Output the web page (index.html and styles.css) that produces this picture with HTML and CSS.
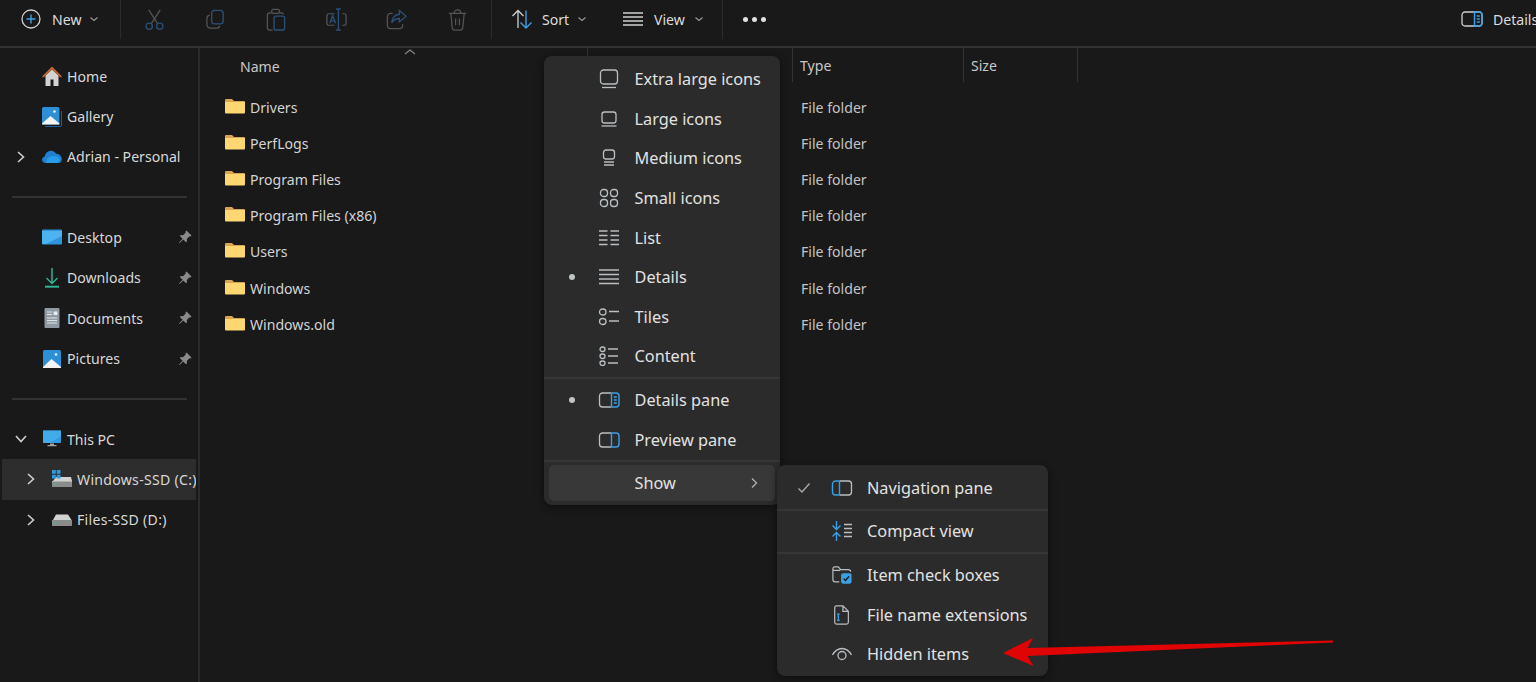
FILE: index.html
```html
<!DOCTYPE html>
<html lang="en">
<head>
<meta charset="utf-8">
<title>File Explorer</title>
<link rel="stylesheet" href="styles.css">
</head>
<body>
<div class="window">
  <header class="toolbar">
    <div class="tb-new">
      <svg class="ic22" viewBox="0 0 22 22"><circle cx="11" cy="11" r="9" class="s-light"/><path d="M11 6.500v9M6.500 11h9" class="s-blue"/></svg>
      <span class="tb-label">New</span>
      <svg class="chev" viewBox="0 0 10 6"><path d="M1.500 1.500 5 4.500 8.500 1.500"/></svg>
    </div>
    <div class="tb-sep"></div>
    <div class="tb-icons">
      <svg class="ic24" viewBox="0 0 24 24"><path d="M6 2l9.500 14.500M18 2 8.500 16.500" class="s-dim"/><circle cx="6.500" cy="19" r="3.300" class="s-dimblue"/><circle cx="17.500" cy="19" r="3.300" class="s-dimblue"/></svg>
      <svg class="ic24" viewBox="0 0 24 24"><rect x="8" y="2.500" width="12" height="14" rx="3" class="s-dimblue"/><path d="M6 7.500C3.800 8 3 9.500 3 11v6c0 2.500 1.500 4 4 4h6c1.500 0 3-.8 3.500-2.500" class="s-dim"/></svg>
      <svg class="ic24" viewBox="0 0 24 24"><path d="M8 5H6C4.500 5 3.500 6 3.500 7.500v13c0 1.500 1 2.500 2.500 2.500h3M16 5h2c1.200 0 2 .6 2.300 1.600" class="s-dim"/><rect x="8" y="1.500" width="8" height="4" rx="1.500" class="s-dim"/><rect x="10.500" y="8.500" width="11" height="14.500" rx="2" class="s-dimblue"/></svg>
      <svg class="ic24" viewBox="0 0 24 24"><path d="M10 6H4C2.500 6 2 7 2 8v8c0 1 .5 2 2 2h6M18 6h2c1.500 0 2 1 2 2v8c0 1-.5 2-2 2h-2" class="s-dim"/><path d="M14 1v22M11.500 1h5M11.500 23h5" class="s-dimblue"/><path d="M5 16 8 8l3 8M6 13.500h4" class="s-dimblue"/></svg>
      <svg class="ic24" viewBox="0 0 24 24"><path d="M8 5.500H6C4 5.500 2.500 7 2.500 9v9c0 2 1.500 3.500 3.500 3.500h9c2 0 3.500-1.500 3.500-3.500v-1" class="s-dim"/><path d="M15 2.500 22 8.500 15 14.500V11c-4 0-6 1-8 4.500C7.500 10 10 7 15 6.500z" class="s-dimblue"/></svg>
      <svg class="ic24" viewBox="0 0 24 24"><path d="M3 5.500h18M5 5.500l1.500 15c.2 1.600 1.300 2.500 2.800 2.500h5.400c1.500 0 2.600-.9 2.800-2.500L19 5.500M8.500 5.500c0-2 1.500-3.500 3.500-3.500s3.500 1.500 3.500 3.500M10 11v7M14 11v7" class="s-dim"/></svg>
    </div>
    <div class="tb-sep"></div>
    <div class="tb-sort">
      <svg class="ic22" viewBox="0 0 22 22"><path d="M7 20V2.500M1.500 8 7 2.500 12.500 8" class="s-light"/><path d="M15 2.500V20M9.500 14.500 15 20l5.500-5.500" class="s-blue"/></svg>
      <span class="tb-label">Sort</span>
      <svg class="chev" viewBox="0 0 10 6"><path d="M1.500 1.500 5 4.500 8.500 1.500"/></svg>
    </div>
    <div class="tb-view">
      <svg class="ic22 wide" viewBox="0 0 22 16"><path d="M1 2h20M1 6h20M1 10h20M1 14h20" class="s-light"/></svg>
      <span class="tb-label">View</span>
      <svg class="chev" viewBox="0 0 10 6"><path d="M1.500 1.500 5 4.500 8.500 1.500"/></svg>
    </div>
    <div class="tb-sep sep-view"></div>
    <div class="tb-more"><i></i><i></i><i></i></div>
    <div class="tb-space"></div>
    <div class="tb-details">
      <svg class="ic22 wide" viewBox="0 0 22 16"><rect x="1" y="1" width="20" height="14" rx="3" class="s-light"/><path d="M13.500 1h4.500a3 3 0 0 1 3 3v8a3 3 0 0 1-3 3h-4.500zM15.800 5h3M15.800 8h3M15.800 11h3" class="s-blue"/></svg>
      <span class="tb-label">Details</span>
    </div>
  </header>

  <div class="body">
    <nav class="sidebar">
      <div class="nav-row">
        <span class="twist"></span>
        <svg class="nav-ic" viewBox="0 0 20 20"><path d="M3.500 9.500V20h5v-6.500h3V20h5V9.500L10 3.500z" fill="#d3d3d3"/><path d="M0 10.500 10 .5l10 10-1.500 1L10 3.300 1.500 11.500z" fill="#c56a36"/></svg>
        <span>Home</span>
      </div>
      <div class="nav-row">
        <span class="twist"></span>
        <svg class="nav-ic" viewBox="0 0 20 20"><path d="M3 19.500h15a1.500 1.500 0 0 0 1.500-1.500V4" fill="none" stroke="#1f5e9e"/><rect x="0" y="0" width="17.500" height="17.500" rx="1.500" fill="#2d8fd6"/><path d="M0 16.500 8.500 9l9 7.500v1H0z" fill="#f4f4f4"/><circle cx="12.500" cy="4.500" r="1.300" fill="#e8f4fb"/></svg>
        <span>Gallery</span>
      </div>
      <div class="nav-row">
        <svg class="twist" viewBox="0 0 10 14"><path d="M2 2l5.500 5L2 12"/></svg>
        <svg class="nav-ic" viewBox="0 0 20 14"><path d="M3.500 13C1.500 13 0 11.500 0 9.700c0-1.600 1.100-3 2.700-3.300C3.500 3 6 .8 9 .8c2.200 0 4.100 1.200 5 3 2.800 0 5.500 1.800 5.800 5.200.2 2.400-1.300 4-3.500 4z" fill="#1f7fd1"/><path d="M5 9c2-2.500 5-3.500 8-3 2.500.3 4 1.500 5 3l-2 4H4z" fill="#2a9be5"/></svg>
        <span>Adrian - Personal</span>
      </div>
      <div class="nav-div"></div>
      <div class="nav-row has-pin">
        <span class="twist"></span>
        <svg class="nav-ic" viewBox="0 0 20 16"><rect y="0.500" width="20" height="15" rx="1" fill="#2f94dc"/><path d="M0 2h20v5L4 15H0z" fill="#4cb3ee"/></svg>
        <span class="nav-text">Desktop</span>
        <svg class="pin" viewBox="0 0 14 14"><path d="M8.500.5 13.500 5.500l-1 1-1-.2L8.800 9l.2 2.200-1 1-2.800-2.800L1.500 13 1 12.500l3.600-3.700L1.800 6l1-1 2.200.2L7.700 2.500l-.2-1z"/></svg>
      </div>
      <div class="nav-row has-pin">
        <span class="twist"></span>
        <svg class="nav-ic" viewBox="0 0 20 20"><path d="M10 0v15M4.500 10 10 15.500 15.500 10" fill="none" stroke="#2fb295" stroke-width="1.500"/><path d="M3 18.700h14" stroke="#2fb295" stroke-width="2"/></svg>
        <span class="nav-text">Downloads</span>
        <svg class="pin" viewBox="0 0 14 14"><path d="M8.500.5 13.500 5.500l-1 1-1-.2L8.800 9l.2 2.200-1 1-2.800-2.800L1.500 13 1 12.500l3.600-3.700L1.800 6l1-1 2.200.2L7.700 2.500l-.2-1z"/></svg>
      </div>
      <div class="nav-row has-pin">
        <span class="twist"></span>
        <svg class="nav-ic" viewBox="0 0 20 20"><rect x="2.500" y="0" width="15" height="20" rx="1" fill="#8f9aa3"/><path d="M5 4h5M5 6.500h5M5 10h10M5 12.500h10M5 15h10" stroke="#dfe4e7" stroke-width="1.200"/><rect x="11.500" y="3.500" width="4" height="3.500" fill="#e6eaec"/></svg>
        <span class="nav-text">Documents</span>
        <svg class="pin" viewBox="0 0 14 14"><path d="M8.500.5 13.500 5.500l-1 1-1-.2L8.800 9l.2 2.200-1 1-2.800-2.800L1.500 13 1 12.500l3.600-3.700L1.800 6l1-1 2.200.2L7.700 2.500l-.2-1z"/></svg>
      </div>
      <div class="nav-row has-pin">
        <span class="twist"></span>
        <svg class="nav-ic" viewBox="0 0 20 20"><rect x="1" y="1" width="18" height="18" rx="1.500" fill="#2d8fd6"/><path d="M1 18 9.500 10l9.500 8v1H1z" fill="#f4f4f4"/><circle cx="14" cy="5.500" r="1.300" fill="#e8f4fb"/></svg>
        <span class="nav-text">Pictures</span>
        <svg class="pin" viewBox="0 0 14 14"><path d="M8.500.5 13.500 5.500l-1 1-1-.2L8.800 9l.2 2.200-1 1-2.800-2.800L1.500 13 1 12.500l3.600-3.700L1.800 6l1-1 2.200.2L7.700 2.500l-.2-1z"/></svg>
      </div>
      <div class="nav-div"></div>
      <div class="nav-row">
        <svg class="twist open" viewBox="0 0 14 10"><path d="M2 2l5 5.500L12 2"/></svg>
        <svg class="nav-ic" viewBox="0 0 20 18"><rect x="1" y="0.500" width="18" height="12.500" rx="1" fill="#2e9ae2"/><path d="M1 .5h18v6L8 13H1z" fill="#4cb3ee" opacity=".7"/><path d="M8 13.500h4v1.500h2.500v1.300h-9V15H8z" fill="#a3a3a3"/></svg>
        <span class="nudge">This PC</span>
      </div>
      <div class="nav-row sub selected">
        <svg class="twist" viewBox="0 0 10 14"><path d="M2 2l5.500 5L2 12"/></svg>
        <svg class="nav-ic" viewBox="0 0 20 18"><path d="M1 11 4 7h15l1 4v5.500H0v-5.500z" fill="#d2d2d2"/><rect y="11.500" width="20" height="5.500" rx="1" fill="#8b8b8b"/><rect x="2" y="13.500" width="2" height="1.500" fill="#35c27e"/><path d="M0 0h3.800v3.800H0zM4.700 0h3.800v3.800H4.700zM0 4.700h3.800v3.800H0zM4.700 4.700h3.800v3.800H4.700z" fill="#2e9ae2"/></svg>
        <span class="clip">Windows-SSD (C:)</span>
      </div>
      <div class="nav-row sub">
        <svg class="twist" viewBox="0 0 10 14"><path d="M2 2l5.500 5L2 12"/></svg>
        <svg class="nav-ic" viewBox="0 0 20 14"><path d="M1 7 4 1.500h12L19.500 7v5.500H0V7z" fill="#d2d2d2"/><rect y="7" width="20" height="6" rx="1" fill="#8b8b8b"/><rect x="2" y="9.300" width="2" height="1.500" fill="#35c27e"/></svg>
        <span>Files-SSD (D:)</span>
      </div>
    </nav>

    <main class="files">
      <div class="list-head">
        <div class="col col-name"><svg class="sort-up" viewBox="0 0 12 6"><path d="M1 5 6 1l5 4"/></svg>Name</div>
        <div class="col col-date"></div>
        <div class="col col-type">Type</div>
        <div class="col col-size">Size</div>
      </div>
      <div class="file-row"><div class="fname"><svg class="folder" viewBox="0 0 20 16"><path d="M0 2a1 1 0 0 1 1-1h6l2 2h10a1 1 0 0 1 1 1v1H0z" fill="#dca553"/><path d="M0 4h20v10.500a1 1 0 0 1-1 1H1a1 1 0 0 1-1-1z" fill="#fcd772"/></svg>Drivers</div><div></div><div class="ftype">File folder</div></div>
      <div class="file-row"><div class="fname"><svg class="folder" viewBox="0 0 20 16"><path d="M0 2a1 1 0 0 1 1-1h6l2 2h10a1 1 0 0 1 1 1v1H0z" fill="#dca553"/><path d="M0 4h20v10.500a1 1 0 0 1-1 1H1a1 1 0 0 1-1-1z" fill="#fcd772"/></svg>PerfLogs</div><div></div><div class="ftype">File folder</div></div>
      <div class="file-row"><div class="fname"><svg class="folder" viewBox="0 0 20 16"><path d="M0 2a1 1 0 0 1 1-1h6l2 2h10a1 1 0 0 1 1 1v1H0z" fill="#dca553"/><path d="M0 4h20v10.500a1 1 0 0 1-1 1H1a1 1 0 0 1-1-1z" fill="#fcd772"/></svg>Program Files</div><div></div><div class="ftype">File folder</div></div>
      <div class="file-row"><div class="fname"><svg class="folder" viewBox="0 0 20 16"><path d="M0 2a1 1 0 0 1 1-1h6l2 2h10a1 1 0 0 1 1 1v1H0z" fill="#dca553"/><path d="M0 4h20v10.500a1 1 0 0 1-1 1H1a1 1 0 0 1-1-1z" fill="#fcd772"/></svg>Program Files (x86)</div><div></div><div class="ftype">File folder</div></div>
      <div class="file-row"><div class="fname"><svg class="folder" viewBox="0 0 20 16"><path d="M0 2a1 1 0 0 1 1-1h6l2 2h10a1 1 0 0 1 1 1v1H0z" fill="#dca553"/><path d="M0 4h20v10.500a1 1 0 0 1-1 1H1a1 1 0 0 1-1-1z" fill="#fcd772"/></svg>Users</div><div></div><div class="ftype">File folder</div></div>
      <div class="file-row"><div class="fname"><svg class="folder" viewBox="0 0 20 16"><path d="M0 2a1 1 0 0 1 1-1h6l2 2h10a1 1 0 0 1 1 1v1H0z" fill="#dca553"/><path d="M0 4h20v10.500a1 1 0 0 1-1 1H1a1 1 0 0 1-1-1z" fill="#fcd772"/></svg>Windows</div><div></div><div class="ftype">File folder</div></div>
      <div class="file-row"><div class="fname"><svg class="folder" viewBox="0 0 20 16"><path d="M0 2a1 1 0 0 1 1-1h6l2 2h10a1 1 0 0 1 1 1v1H0z" fill="#dca553"/><path d="M0 4h20v10.500a1 1 0 0 1-1 1H1a1 1 0 0 1-1-1z" fill="#fcd772"/></svg>Windows.old</div><div></div><div class="ftype">File folder</div></div>
    </main>
  </div>
</div>

<div class="menu menu-view">
  <div class="mi"><span class="mark"></span><svg class="mic" viewBox="0 0 22 20"><rect x="2.500" y="1" width="17" height="14" rx="3" class="s-menu"/><path d="M4 18.500h14" class="s-menu"/></svg><span>Extra large icons</span></div>
  <div class="mi"><span class="mark"></span><svg class="mic" viewBox="0 0 22 20"><rect x="4" y="3" width="14" height="11" rx="2.500" class="s-menu"/><path d="M3.500 17h15" class="s-menu"/></svg><span>Large icons</span></div>
  <div class="mi"><span class="mark"></span><svg class="mic" viewBox="0 0 22 20"><rect x="5.500" y="2" width="11" height="9" rx="2.500" class="s-menu"/><path d="M6 14h10M6 17h10" class="s-menu"/></svg><span>Medium icons</span></div>
  <div class="mi"><span class="mark"></span><svg class="mic" viewBox="0 0 22 20"><rect x="2.500" y="1.500" width="7" height="7" rx="3" class="s-menu"/><rect x="12.500" y="1.500" width="7" height="7" rx="3" class="s-menu"/><rect x="2.500" y="11.500" width="7" height="7" rx="3" class="s-menu"/><rect x="12.500" y="11.500" width="7" height="7" rx="3" class="s-menu"/></svg><span>Small icons</span></div>
  <div class="mi"><span class="mark"></span><svg class="mic" viewBox="0 0 22 20"><path d="M1 3h8.500M1 7.500h8.500M1 12h8.500M1 16.500h8.500M12.500 3H21M12.500 7.500H21M12.500 12H21M12.500 16.500H21" class="s-menu"/></svg><span>List</span></div>
  <div class="mi"><span class="mark"><i class="dot"></i></span><svg class="mic" viewBox="0 0 22 20"><path d="M1 3h20M1 7.500h20M1 12h20M1 16.500h20" class="s-menu"/></svg><span>Details</span></div>
  <div class="mi"><span class="mark"></span><svg class="mic" viewBox="0 0 22 20"><rect x="1.500" y="2" width="6.500" height="6" rx="3" class="s-menu"/><rect x="1.500" y="11.500" width="6.500" height="6" rx="3" class="s-menu"/><path d="M11 4.500h10M11 14h10" class="s-menu"/></svg><span>Tiles</span></div>
  <div class="mi"><span class="mark"></span><svg class="mic" viewBox="0 0 22 20"><rect x="2" y="1" width="5" height="4.500" rx="2.200" class="s-menu"/><rect x="2" y="8" width="5" height="4.500" rx="2.200" class="s-menu"/><rect x="2" y="15" width="5" height="4.500" rx="2.200" class="s-menu"/><path d="M10 3h10M10 10h10M10 17h10" class="s-menu"/></svg><span>Content</span></div>
  <div class="msep"></div>
  <div class="mi"><span class="mark"><i class="dot"></i></span><svg class="mic" viewBox="0 0 22 20"><path d="M13 3H4.500a3 3 0 0 0-3 3v8a3 3 0 0 0 3 3H13" class="s-menu"/><path d="M13.500 3H18a3 3 0 0 1 3 3v8a3 3 0 0 1-3 3h-4.500zM15.800 7h3M15.800 10h3M15.800 13h3" class="s-blue"/></svg><span>Details pane</span></div>
  <div class="mi"><span class="mark"></span><svg class="mic" viewBox="0 0 22 20"><path d="M13 3H4.500a3 3 0 0 0-3 3v8a3 3 0 0 0 3 3H13" class="s-menu"/><path d="M13.500 3H18a3 3 0 0 1 3 3v8a3 3 0 0 1-3 3h-4.500z" class="s-blue"/></svg><span>Preview pane</span></div>
  <div class="msep"></div>
  <div class="mi mi-show"><span class="mark"></span><span class="mic"></span><span>Show</span><svg class="mi-arrow" viewBox="0 0 8 12"><path d="M2 1.500 6.500 6 2 10.500"/></svg></div>
</div>

<div class="menu menu-show">
  <div class="mi"><svg class="check" viewBox="0 0 14 12"><path d="M1.500 6.500 5 10l7.500-8.500"/></svg><svg class="mic" viewBox="0 0 22 20"><path d="M8.500 3H4.500a3 3 0 0 0-3 3v8a3 3 0 0 0 3 3h4z" class="s-blue"/><path d="M9 3h8.500a3 3 0 0 1 3 3v8a3 3 0 0 1-3 3H9" class="s-menu"/></svg><span>Navigation pane</span></div>
  <div class="msep"></div>
  <div class="mi"><span class="mark"></span><svg class="mic" viewBox="0 0 22 20"><path d="M5.500 0v8.500M1.500 4.500 5.500 8.500 9.500 4.500M5.500 20v-8.500M1.500 15.500 5.500 11.500 9.500 15.500" class="s-blue"/><path d="M13 3.500h8M13 7.500h8M13 11.500h8M13 15.500h8" class="s-menu"/></svg><span>Compact view</span></div>
  <div class="msep"></div>
  <div class="mi"><span class="mark"></span><svg class="mic" viewBox="0 0 22 22"><path d="M8 18.500H3.500A2.500 2.500 0 0 1 1 16V4a2 2 0 0 1 2-2h4l2.500 3H18a2.500 2.500 0 0 1 2.500 2.500M1 6h8" class="s-menu"/><rect x="10" y="9" width="11.500" height="11.500" rx="2" fill="#3aa0e0"/><path d="M12.800 15l2 2 4-4.500" fill="none" stroke="#111" stroke-width="1.400"/></svg><span>Item check boxes</span></div>
  <div class="mi"><span class="mark"></span><svg class="mic" viewBox="0 0 22 22"><path d="M5 1h7l6 6v12a2 2 0 0 1-2 2H5a2 2 0 0 1-2-2V3a2 2 0 0 1 2-2zM12 1v6h6" class="s-menu"/><path d="M7 10v7M5.500 10h3M5.500 17h3" class="s-blue"/></svg><span>File name extensions</span></div>
  <div class="mi"><span class="mark"></span><svg class="mic" viewBox="0 0 22 20"><path d="M1.500 11C4 6.500 7 4.500 11 4.500s7 2 9.500 6.500" class="s-menu"/><circle cx="11" cy="11.500" r="4" class="s-menu"/></svg><span>Hidden items</span></div>
</div>

<svg class="red-arrow" viewBox="0 0 336 32"><path d="M3 18 33 3 27.500 13 333 5.500 333 7.500 27.500 21 33.500 31z"/></svg>
</body>
</html>
```

FILE: styles.css
```css
* { box-sizing: border-box; }
html, body { margin: 0; height: 100%; overflow: hidden; }
body {
  background: #191919;
  color: #dcdcdc;
  font-family: "Noto Sans", "Open Sans", "Liberation Sans", sans-serif;
  font-size: 14.1px;
  position: relative;
}
svg { display: block; flex: none; }

.window { display: flex; flex-direction: column; height: 682px; }

/* stroke classes */
.s-light { fill: none; stroke: #d0d0d0; stroke-width: 1.3; }
.s-blue { fill: none; stroke: #3aa0e6; stroke-width: 1.4; }
.s-dim { fill: none; stroke: #555; stroke-width: 1.3; }
.s-dimblue { fill: none; stroke: #2a5078; stroke-width: 1.4; }
.s-menu { fill: none; stroke: #b9bfc2; stroke-width: 1.3; }

/* toolbar */
.toolbar {
  height: 48px;
  flex: none;
  display: flex;
  align-items: center;
  border-bottom: 2px solid #333;
  padding-bottom: 8px;
  overflow: hidden;
}
.ic22 { width: 22px; height: 22px; }
.ic22.wide { height: 16px; }
.ic24 { width: 23px; height: 23px; }
.chev { width: 10px; height: 6px; fill: none; stroke: #9a9a9a; stroke-width: 1.1; }
.tb-label { color: #dcdcdc; }
.tb-sep { width: 1px; height: 40px; background: #2c2c2c; flex: none; }
.tb-new { width: 120px; display: flex; align-items: center; padding-left: 20px; flex: none; }
.tb-new .tb-label { margin-left: 10px; }
.tb-new .chev { margin-left: 8px; }
.tb-icons { width: 370px; flex: none; display: flex; justify-content: space-between; padding: 0 22px; }
.tb-sort { width: 110px; padding-left: 19px; display: flex; align-items: center; flex: none; }
.tb-sort .tb-label { margin-left: 9px; }
.tb-sort .chev { margin-left: 8px; }
.tb-view { display: flex; align-items: center; flex: none; width: 120px; padding-left: 20px; }
.tb-view .tb-label { margin-left: 10px; }
.tb-view .chev { margin-left: 9px; }
.tb-more { display: flex; gap: 4px; margin-left: 20px; flex: none; }
.tb-more i { width: 5px; height: 5px; border-radius: 50%; background: #e2e2e2; }
.tb-space { flex: 1; }
.tb-details { display: flex; align-items: center; flex: none; width: 75px; overflow: hidden; }
.tb-details .tb-label { margin-left: 10px; }

/* body */
.body { flex: 1; display: flex; min-height: 0; }
.sidebar {
  width: 200px;
  flex: none;
  border-right: 2px solid #2b2b2b;
  padding: 8px 0 0 2px;
}
.nav-row {
  height: 40.4px;
  display: flex;
  align-items: center;
  padding-left: 12px;
  width: 194px;
  white-space: nowrap;
  color: #d8d8d8;
}
.nav-row.sub { padding-left: 22px; letter-spacing: .28px; }
.nav-row.selected { background: #2d2d2d; }
.twist { width: 14px; height: 14px; margin-right: 14px; flex: none; fill: none; stroke: #cfcfcf; stroke-width: 1.6; }
.nav-ic { width: 20px; height: 20px; margin-right: 5px; flex: none; }
.nudge { margin-top: 2px; }
.nav-text { flex: 1; }
.pin { width: 14px; height: 14px; fill: #8a8a8a; margin-right: 4px; }
.clip { overflow: hidden; }
.nav-div { height: 2px; background: #333; margin: 19px 10px 19px 10px; width: 175px; }

/* file list */
.files { flex: 1; min-width: 0; }
.list-head, .file-row { display: grid; grid-template-columns: 388px 205px 171px 114px; }
.list-head { height: 34px; }
.col { border-right: 1px solid #333; display: flex; align-items: center; position: relative; padding-left: 7px; color: #c8c8c8; }
.col-name { padding-left: 40px; padding-top: 2px; }
.sort-up { position: absolute; left: 204px; top: 1px; width: 12px; height: 6px; fill: none; stroke: #8a8a8a; stroke-width: 1.1; }
.file-row { height: 36.2px; align-items: center; }
.list-head + .file-row { margin-top: 7px; }
.fname { display: flex; align-items: center; padding-left: 25px; color: #d4d4d4; }
.folder { width: 20px; height: 16px; margin-right: 5px; margin-bottom: 3px; }
.ftype { grid-column: 3; padding-left: 8px; color: #c4c4c4; }

/* menus */
.menu {
  position: absolute;
  background: #2b2b2b;
  border-radius: 8px;
  box-shadow: 0 2px 8px rgba(0, 0, 0, .45);
  color: #e2e2e2;
  font-size: 16.3px;
  display: flex;
  flex-direction: column;
}
.menu-view { left: 544px; top: 56px; width: 236px; height: 449px; padding-top: 3.5px; }
.menu-show { left: 777px; top: 465px; width: 271px; height: 211px; padding-top: 3px; }
.mi { height: 39.6px; display: flex; align-items: center; flex: none; white-space: nowrap; position: relative; }
.mark { width: 54px; flex: none; display: flex; justify-content: center; padding-left: 1px; }
.dot { width: 6px; height: 6px; border-radius: 50%; background: #bfc4c6; display: block; }
.mic { width: 22px; height: 20px; flex: none; margin-right: 14.5px; }
.menu-show .mark + .mic, .menu-show .check + .mic { margin-right: 14px; }
.check { width: 14px; height: 12px; margin: 0 20px; fill: none; stroke: #a8a8a8; stroke-width: 1.4; flex: none; }
.msep { height: 2px; background: #363636; margin: 1px 0; flex: none; }
.mi-show {
  background: #383838;
  border-radius: 5px;
  margin: 2px 5px 0;
  height: 36px;
  width: 226px;
}
.mi-show .mark { width: 49px; }
.mi-arrow { position: absolute; right: 17px; top: 12px; width: 8px; height: 12px; fill: none; stroke: #b0b0b0; stroke-width: 1.3; }

.red-arrow { position: absolute; left: 1000px; top: 635px; width: 336px; height: 32px; fill: #e00404; }
```
